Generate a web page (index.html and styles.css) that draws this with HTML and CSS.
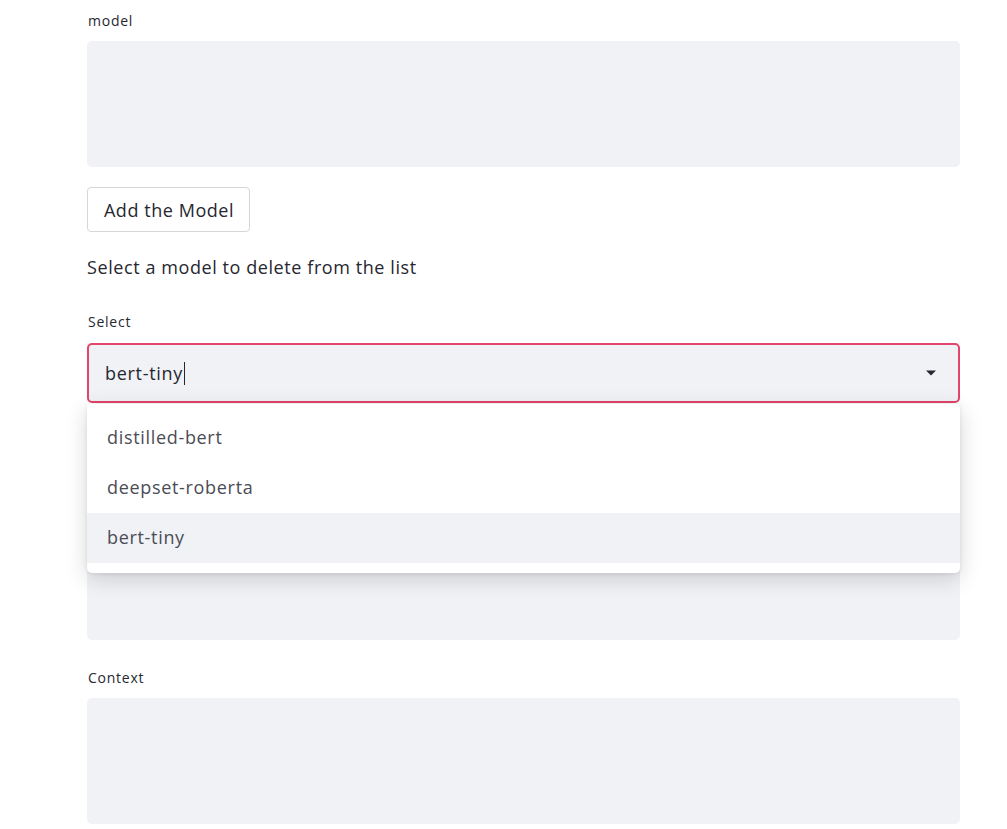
FILE: index.html
```html
<!DOCTYPE html>
<html>
<head>
<meta charset="utf-8">
<link rel="stylesheet" href="styles.css">
</head>
<body>
<main class="page">
  <div class="field">
    <div class="label">model</div>
    <div class="textarea"></div>
  </div>
  <button class="btn">Add the Model</button>
  <p class="text">Select a model to delete from the list</p>
  <div class="field select-field">
    <div class="label">Select</div>
    <div class="select">
      <span class="value">bert-tiny</span><span class="caret"></span>
      <svg class="arrow" width="10" height="6" viewBox="0 0 10 6"><path d="M0 0.5h10L5 5.5z" fill="#262730"/></svg>
    </div>
    <ul class="menu">
      <li class="opt">distilled-bert</li>
      <li class="opt">deepset-roberta</li>
      <li class="opt active">bert-tiny</li>
    </ul>
  </div>
  <div class="field">
    <div class="label"></div>
    <div class="textarea tall"></div>
  </div>
  <div class="field">
    <div class="label">Context</div>
    <div class="textarea"></div>
  </div>
</main>
</body>
</html>
```

FILE: styles.css
```css
html, body {
  margin: 0;
  padding: 0;
  background: #ffffff;
}
body {
  font-family: "Open Sans", "Noto Sans", sans-serif;
  color: #262730;
  letter-spacing: 0.6px;
}
.page {
  width: 873px;
  margin-left: 87px;
  padding-top: 9px;
  display: flex;
  flex-direction: column;
  align-items: flex-start;
}
.field {
  width: 100%;
  display: flex;
  flex-direction: column;
}
.label {
  font-size: 14px;
  line-height: 24px;
  height: 22px;
  margin-bottom: 10px;
  padding-left: 1px;
  letter-spacing: 0.75px;
}
.textarea {
  height: 126px;
  background: #f0f2f6;
  border-radius: 5px;
}
.textarea.tall {
  height: 179px;
}
.btn {
  margin-top: 20px;
  height: 45px;
  width: 163px;
  padding: 0 0 0 1px;
  background: #ffffff;
  border: 1px solid #d6d6d9;
  border-radius: 4px;
  font-family: inherit;
  font-size: 18px;
  letter-spacing: 0.55px;
  color: #262730;
}
.text {
  margin: 22px 0 0 0;
  font-size: 18px;
  line-height: 27px;
  letter-spacing: 0.58px;
}
.select-field {
  margin-top: 29px;
  position: relative;
  z-index: 2;
}
.select-field .label {
  margin-bottom: 11px;
}
.select {
  box-sizing: border-box;
  height: 60px;
  border: 2px solid #e3456b;
  border-radius: 5px;
  background: #f0f2f6;
  display: flex;
  align-items: center;
  padding-left: 16px;
  padding-right: 22px;
  font-size: 18px;
  letter-spacing: 0.7px;
}
.value {
  line-height: 24px;
}
.caret {
  display: inline-block;
  width: 1px;
  height: 23px;
  background: #262730;
  margin-left: 1px;
}
.arrow {
  margin-left: auto;
}
.menu {
  position: absolute;
  top: 94px;
  left: 0;
  right: 0;
  margin: 0;
  padding: 9px 0 10px;
  list-style: none;
  background: #ffffff;
  border-radius: 0 0 5px 5px;
  box-shadow: 0 6px 22px rgba(0, 0, 0, 0.16), 0 1px 4px rgba(0, 0, 0, 0.08);
}
.opt {
  height: 50px;
  line-height: 48px;
  padding-left: 20px;
  font-size: 18px;
  letter-spacing: 0.68px;
  color: #4b4c55;
}
.opt.active {
  background: #f0f2f6;
}
.field + .field {
  margin-top: 26px;
}
```
